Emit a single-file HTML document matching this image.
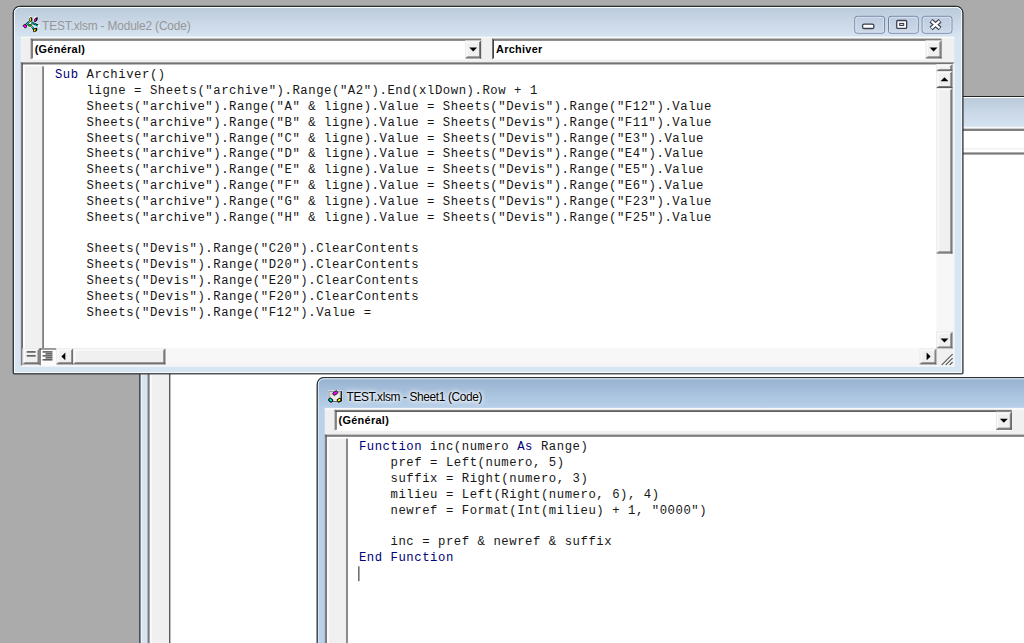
<!DOCTYPE html>
<html>
<head>
<meta charset="utf-8">
<title>VBA</title>
<style>
html,body{margin:0;padding:0;}
body{width:1024px;height:643px;overflow:hidden;background:#ababab;position:relative;font-family:"Liberation Sans",sans-serif;}
#root{position:absolute;left:0;top:0;width:1040px;height:655px;transform:scale(0.99);transform-origin:0 0;}
/* window frame */
.win{position:absolute;box-sizing:border-box;border:1px solid #202224;box-shadow:0 0 0 0.15px rgba(34,36,38,0.8);border-radius:7px 7px 1px 1px;background:#d7e4f2;overflow:hidden;}
.win .inner{position:absolute;left:0;top:0;right:0;bottom:0;border:1px solid #fdfeff;border-radius:6px 6px 0 0;}
.win .tgrad{position:absolute;left:1px;right:1px;top:1px;height:30px;background:linear-gradient(#bccbdb,#d7e4f2);border-radius:5px 5px 0 0;}
.win.active{background:#b9d1ea;}
.win.active .tgrad{background:linear-gradient(#98b3d1,#b9d1ea);}
.win.active .inner{border-color:#dfeaf6;}
.title{position:absolute;left:28.5px;top:11px;font-size:12px;line-height:16px;color:#969696;white-space:nowrap;letter-spacing:-0.16px;}
.win.active .title{color:#000;letter-spacing:-0.36px;text-shadow:0 0 3px #fff,0 0 5px #fff,0 0 7px #fff;}
.ticon{position:absolute;left:6px;top:7px;width:24px;height:24px;}
.content{position:absolute;left:7px;top:30px;right:7px;bottom:7px;background:linear-gradient(#f9f9f7 0,#f9f9f7 1.6px,#f0f0f0 2px,#f0f0f0 100%);}
/* caption buttons */
.cb{position:absolute;top:9px;width:31.5px;height:18px;box-sizing:border-box;border:1.5px solid #6c7ca0;border-radius:3px;background:linear-gradient(#becddf,#cbd9e9);}
.cb:before{content:"";position:absolute;left:0;top:0;right:0;bottom:0;border:1px solid #d9e3f0;border-radius:2px;}
.cb svg{position:absolute;left:-1.2px;top:-0.2px;width:30px;height:16px;}
/* combobox */
.combo{position:absolute;top:2px;height:21px;box-sizing:border-box;background:#fff;border-top:1px solid #707070;border-left:1px solid #707070;border-bottom:1px solid #fff;}
.combo:before{content:"";position:absolute;left:0;top:0;right:0;bottom:0;border-top:1px solid #424242;border-left:1px solid #424242;}
.combo .txt{position:absolute;left:3px;top:2.5px;font-size:11px;line-height:14px;font-weight:bold;color:#000;white-space:nowrap;letter-spacing:0.3px;}
.combo .btn{position:absolute;right:0;top:1px;width:16px;height:18px;}
/* 3d raised button */
.btn3{position:absolute;box-sizing:border-box;background:#f0f0f0;border-top:1px solid #e8e8e8;border-left:1px solid #e8e8e8;border-right:1px solid #424242;border-bottom:1px solid #424242;}
.btn3:before{content:"";position:absolute;left:0;top:0;right:0;bottom:0;border-top:1px solid #fff;border-left:1px solid #fff;border-right:1px solid #6c6c6c;border-bottom:1px solid #6c6c6c;}
.arr{position:absolute;width:0;height:0;}
.arr.d{border-left:4.5px solid transparent;border-right:4.5px solid transparent;border-top:4.5px solid #000;}
.arr.u{border-left:4.5px solid transparent;border-right:4.5px solid transparent;border-bottom:4.5px solid #000;}
.arr.l{border-top:4.5px solid transparent;border-bottom:4.5px solid transparent;border-right:4.5px solid #000;}
.arr.r{border-top:4.5px solid transparent;border-bottom:4.5px solid transparent;border-left:4.5px solid #000;}
/* code area */
.code{position:absolute;left:0;top:26px;right:0;bottom:0;background:#fff;box-sizing:border-box;border-top:1px solid #707070;border-left:1px solid #707070;border-right:1px solid #f0f0f0;border-bottom:1px solid #fff;}
.code:before{content:"";position:absolute;left:0;top:0;right:0;bottom:0;border-top:1px solid #424242;border-left:1px solid #424242;border-right:1px solid #f0f0f0;border-bottom:1px solid #e3e3e3;}
.margin{position:absolute;left:2px;top:3px;bottom:1px;width:18px;background:#f0f0f0;border-left:1px solid #fff;border-right:1px solid #202020;}
pre{position:absolute;margin:0;left:33.5px;top:4px;font-family:"Liberation Mono",monospace;font-size:12.4px;letter-spacing:0.56px;line-height:16px;color:#161616;white-space:pre;}
pre b{font-weight:normal;color:#00007a;}
.track{background:#f7f7f7 conic-gradient(#fff 25%,#efefef 0 50%,#fff 0 75%,#efefef 0) 0 0/2px 2px;position:absolute;}
</style>
</head>
<body>
<div id="root">

<!-- window 3 (behind) -->
<div class="win" id="w3" style="left:141px;top:97px;width:1000px;height:700px;">
  <div class="tgrad"></div><div class="inner"></div>
  <div class="content">
    <div class="combo" style="left:10px;width:455px;"></div>
    <div class="combo" style="left:476px;width:700px;"></div>
    <div style="position:absolute;left:476px;width:700px;top:21.6px;height:1.2px;background:#e6e6e6;"></div>
    <div style="position:absolute;left:476px;width:700px;top:23px;height:3px;background:#fff;"></div>
    <div class="code"><div class="margin"></div></div>
  </div>
</div>

<!-- window 1 -->
<div class="win" id="w1" style="left:13px;top:6px;width:960px;height:372px;">
  <div class="tgrad"></div><div class="inner"></div>
  <svg class="ticon" viewBox="0 0 24 24">
    <g fill="none" stroke="#fff" stroke-opacity="0.9" stroke-width="3.4" stroke-linecap="round">
      <path d="M4.6 12.6 L9.4 8 M10.8 4.2 V8.5 M15.9 4.2 L14.8 8.4 M12 9 L18.4 11.8 M12.5 13 L15.2 17.4 M8.5 11.8 H12"/>
    </g>
    <g stroke="#000" stroke-width="0.7">
      <path d="M4.6 12.6 L9.4 8 M12 9 L18.4 11.8 M12.5 13 L15.2 17.2" stroke="#000" stroke-width="2.3" fill="none"/>
      <path d="M6.2 11.2 L9.3 8.2 M12.4 9.2 L14.9 10.4 M15.4 11.3 L18.2 11.9 M12.7 13.4 L14 15.2" stroke="#00f0f0" stroke-width="1.5" stroke-dasharray="1.2 0.5" fill="none"/>
      <path d="M11.5 10.5 L15.5 14" stroke="#fff" stroke-width="0.8" fill="none"/>
      <path d="M7.2 10.8 L9 12" stroke="#e02020" stroke-width="0.5" fill="none"/>
      <circle cx="13" cy="8.9" r="1.2" fill="#007878" stroke="none"/>
      <ellipse cx="11.5" cy="5.6" rx="1.2" ry="2.2" fill="#000" stroke="none"/>
      <ellipse cx="10.7" cy="5.9" rx="1.05" ry="2.05" fill="#ffff00" transform="rotate(8 10.7 5.9)"/>
      <ellipse cx="16.7" cy="5.6" rx="1.2" ry="2.3" fill="#000" stroke="none" transform="rotate(22 16.7 5.6)"/>
      <ellipse cx="15.8" cy="6.1" rx="1.0" ry="2.05" fill="#ff00ff" transform="rotate(22 15.8 6.1)"/>
      <ellipse cx="5.2" cy="12.4" rx="1.9" ry="1.5" fill="#ff00ff" transform="rotate(35 5.2 12.4)"/>
      <rect x="8.6" y="10.8" width="3.5" height="1.6" rx="0.6" fill="#00f000"/>
      <ellipse cx="16.2" cy="16.1" rx="1.3" ry="2.1" fill="#000" stroke="none" transform="rotate(30 16.2 16.1)"/>
      <ellipse cx="15.1" cy="16.5" rx="1.05" ry="1.95" fill="#ffff00" transform="rotate(30 15.1 16.5)"/>
    </g>
  </svg>
  <div class="title">TEST.xlsm - Module2 (Code)</div>
  <div class="cb" style="left:848.5px;"><svg viewBox="0 0 30 16"><rect x="9.3" y="7.4" width="11.4" height="4.4" rx="1.6" fill="#fff" stroke="#3a3d4e" stroke-width="1.3"/></svg></div>
  <div class="cb" style="left:882.5px;"><svg viewBox="0 0 30 16"><rect x="9.8" y="3.7" width="10" height="8" rx="1" fill="#fff" stroke="#3a3d4e" stroke-width="1.3"/><rect x="12.8" y="6.7" width="4" height="2" fill="#e8eef6" stroke="#3a3d4e" stroke-width="1.1"/></svg></div>
  <div class="cb" style="left:916.5px;"><svg viewBox="0 0 30 16"><path d="M10.4 3.9 L19.6 11.7 M19.6 3.9 L10.4 11.7" stroke="#3a3d4e" stroke-width="4.6" stroke-linecap="butt" fill="none"/><path d="M10.9 4.3 L19.1 11.3 M19.1 4.3 L10.9 11.3" stroke="#fff" stroke-width="2.3" stroke-linecap="butt" fill="none"/></svg></div>
  <div class="content" style="right:8px;">
    <div class="combo" style="left:10px;width:455px;"><div class="txt">(Général)</div><div class="btn btn3"><div class="arr d" style="left:2.5px;top:6px;"></div></div></div>
    <div class="combo" style="left:476px;width:454px;"><div class="txt">Archiver</div><div class="btn btn3"><div class="arr d" style="left:2.5px;top:6px;"></div></div></div>
    <div class="code"><div class="margin"></div>
<pre><b>Sub</b> Archiver()
    ligne = Sheets("archive").Range("A2").End(xlDown).Row + 1
    Sheets("archive").Range("A" &amp; ligne).Value = Sheets("Devis").Range("F12").Value
    Sheets("archive").Range("B" &amp; ligne).Value = Sheets("Devis").Range("F11").Value
    Sheets("archive").Range("C" &amp; ligne).Value = Sheets("Devis").Range("E3").Value
    Sheets("archive").Range("D" &amp; ligne).Value = Sheets("Devis").Range("E4").Value
    Sheets("archive").Range("E" &amp; ligne).Value = Sheets("Devis").Range("E5").Value
    Sheets("archive").Range("F" &amp; ligne).Value = Sheets("Devis").Range("E6").Value
    Sheets("archive").Range("G" &amp; ligne).Value = Sheets("Devis").Range("F23").Value
    Sheets("archive").Range("H" &amp; ligne).Value = Sheets("Devis").Range("F25").Value

    Sheets("Devis").Range("C20").ClearContents
    Sheets("Devis").Range("D20").ClearContents
    Sheets("Devis").Range("E20").ClearContents
    Sheets("Devis").Range("F20").ClearContents
    Sheets("Devis").Range("F12").Value =</pre>
      <!-- vertical scrollbar -->
      <div class="track" style="right:1px;top:1px;bottom:17px;width:16.5px;"></div>
      <div class="btn3" style="right:1px;top:1px;width:16.5px;height:7px;"></div>
      <div class="btn3" style="right:1px;top:8px;width:16.5px;height:17px;"><div class="arr u" style="left:3.6px;top:4.5px;"></div></div>
      <div class="btn3" style="right:1px;top:25px;width:16.5px;height:167px;"></div>
      <div class="btn3" style="right:1px;bottom:17px;width:16.5px;height:17px;"><div class="arr d" style="left:3.4px;top:6.2px;"></div></div>
      <!-- horizontal scrollbar -->
      <div class="track" style="left:1px;right:17.5px;bottom:1px;height:16px;"></div>
      <div class="btn3" style="left:1px;bottom:1px;width:17px;height:16px;">
        <div style="position:absolute;left:2.5px;top:1.5px;width:9px;height:1.3px;background:#000;"></div>
        <div style="position:absolute;left:2.5px;top:5.5px;width:9px;height:1.3px;background:#000;"></div>
      </div>
      <div style="position:absolute;left:18px;bottom:0;width:17px;height:17.5px;background:#fbfbfb;border-top:1.5px solid #3c3c3c;border-left:1.5px solid #3c3c3c;box-sizing:border-box;">
        <div style="position:absolute;left:2px;top:2.4px;width:10px;height:1.35px;background:#000;"></div>
        <div style="position:absolute;left:5px;top:4.4px;width:7px;height:1.35px;background:#000;"></div>
        <div style="position:absolute;left:2px;top:6.4px;width:10px;height:1.35px;background:#000;"></div>
        <div style="position:absolute;left:5px;top:8.4px;width:7px;height:1.35px;background:#000;"></div>
        <div style="position:absolute;left:2px;top:10.4px;width:10px;height:1.35px;background:#000;"></div>
      </div>
      <div class="btn3" style="left:35px;bottom:1px;width:17px;height:16px;"><div class="arr l" style="left:3.5px;top:2.5px;"></div></div>
      <div class="btn3" style="left:52px;bottom:1px;width:93px;height:16px;"></div>
      <div class="btn3" style="right:17.5px;bottom:1px;width:17px;height:16px;"><div class="arr r" style="left:6.5px;top:2.5px;"></div></div>
      <div style="position:absolute;right:1px;bottom:1px;width:16.5px;height:16px;background:#f0f0f0;">
        <svg viewBox="0 0 17 17" style="position:absolute;left:0;top:0;width:17px;height:17px;overflow:hidden;"><path d="M5.3 16.8 L16.3 5.8 M9.3 16.8 L16.3 9.8 M13.3 16.8 L16.3 13.8" stroke="#6a6a6a" stroke-width="1.5" fill="none"/><path d="M6.6 16.8 L16.3 7.1 M10.6 16.8 L16.3 11.1 M14.6 16.8 L16.3 15.1" stroke="#fff" stroke-width="0.9" fill="none"/></svg>
      </div>
    </div>
  </div>
</div>

<!-- window 2 (active) -->
<div class="win active" id="w2" style="left:320px;top:381px;width:900px;height:400px;">
  <div class="tgrad"></div><div class="inner"></div>
  <svg class="ticon" viewBox="0 0 24 24" style="left:6px;top:7.5px;">
    <rect x="5.3" y="5.3" width="12.4" height="9.8" fill="#dcd9d6" stroke="#fff" stroke-opacity="0.7" stroke-width="2.2"/>
    <rect x="5.3" y="5.3" width="12.4" height="9.8" fill="#dcd9d6" stroke="#8a8a8a" stroke-width="0.9"/>
    <path d="M17.7 5.3 V15.1 H5.3" fill="none" stroke="#000" stroke-width="1.1"/>
    <path d="M7.5 8.5 L11 11.5 L15.5 7.5 L15.5 13.5 L7.5 13.5 Z" fill="#efeeec" stroke="none"/>
    <path d="M9 14.6 H14" stroke="#fff" stroke-width="1"/>
    <g transform="rotate(-32 11.6 7)"><rect x="9.1" y="5.6" width="5" height="2.9" rx="0.9" fill="#ff00ff" stroke="#06280f" stroke-width="0.9"/></g>
    <g transform="rotate(40 7 14.2)"><rect x="5.1" y="12.7" width="3.8" height="3" rx="0.6" fill="#00f0f0" stroke="#000" stroke-width="1"/></g>
    <g transform="rotate(-35 15.6 14.2)"><rect x="13.8" y="12.8" width="3.6" height="2.8" rx="0.6" fill="#ffff00" stroke="#000" stroke-width="1"/></g>
  </svg>
  <div class="title" style="left:29px;top:11.3px;">TEST.xlsm - Sheet1 (Code)</div>
  <div class="content">
    <div class="combo" style="left:10px;width:684px;"><div class="txt" style="top:2px;">(Général)</div><div class="btn btn3"><div class="arr d" style="left:2.5px;top:6px;"></div></div></div>
    <div class="code" style="top:27px;"><div class="margin"></div>
<pre><b>Function</b> inc(numero <b>As</b> Range)
    pref = Left(numero, 5)
    suffix = Right(numero, 3)
    milieu = Left(Right(numero, 6), 4)
    newref = Format(Int(milieu) + 1, "0000")

    inc = pref &amp; newref &amp; suffix
<b>End Function</b></pre>
      <div style="position:absolute;left:32.6px;top:131.6px;width:1.4px;height:15.4px;background:#1c1c1c;"></div>
    </div>
  </div>
</div>

</div>
</body>
</html>
